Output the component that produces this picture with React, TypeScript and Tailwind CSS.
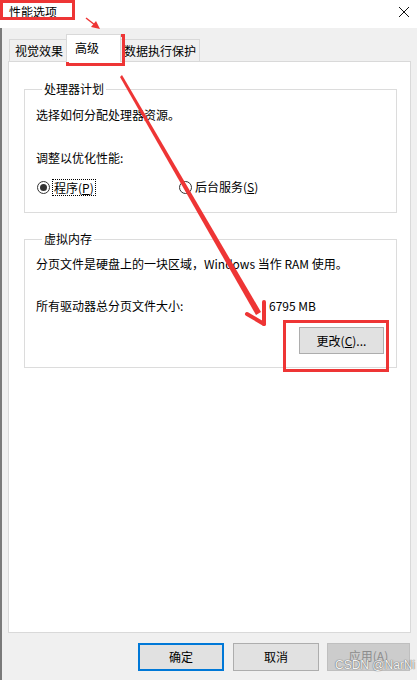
import React from "react";

const RED = "#ee3535";

function Radio({ checked }: { checked: boolean }) {
  return (
    <span className="w-[13px] h-[13px] rounded-full border border-[#333333] bg-white flex items-center justify-center shrink-0">
      {checked && <span className="w-[7px] h-[7px] rounded-full bg-[#333333]" />}
    </span>
  );
}

export default function App() {
  return (
    <div
      className="relative w-[417px] h-[680px] bg-[#f0f0f0] text-black text-[12px] leading-[16px] overflow-hidden"
      style={{ fontFamily: '"Noto Sans CJK SC", "Noto Sans", sans-serif' }}
    >
      {/* Title bar */}
      <div className="h-[28px] bg-white flex items-center justify-between pl-[9px] pr-[7px]">
        <span className="mt-[-4px]">性能选项</span>
        <svg width="12" height="12" viewBox="0 0 12 12" className="mt-[-4px]">
          <path d="M1 1 L11 11 M11 1 L1 11" stroke="#111" strokeWidth="1" />
        </svg>
      </div>

      {/* Body */}
      <div className="border-l-[2px] border-[#7a7a7a] pl-[6px] h-[652px] flex flex-col">
        {/* Tabs */}
        <div className="h-[33px] flex items-end pl-[1px]">
          <div className="h-[22px] w-[58px] border border-b-0 border-[#d9d9d9] flex items-center pl-[5px]">
            视觉效果
          </div>
          <div className="relative z-10 h-[28px] w-[55px] ml-[-1px] mb-[-1px] bg-white border border-b-0 border-[#d9d9d9] flex items-start pt-[5px] pl-[8px]">
            高级
          </div>
          <div className="h-[22px] w-[80px] ml-[-1px] border border-b-0 border-[#d9d9d9] flex items-center pl-[3px]">
            数据执行保护
          </div>
        </div>

        {/* Panel */}
        <div className="w-[403px] h-[572px] border border-[#d9d9d9] bg-white pt-[19px] pl-[15px]">
          <fieldset className="w-[373px] border border-[#dcdcdc] pl-[11px] pr-[12px] pb-[16px]">
            <legend className="ml-[6px] px-[2px]">处理器计划</legend>
            <div className="mt-[10px]">选择如何分配处理器资源。</div>
            <div className="mt-[27px]">调整以优化性能:</div>
            <div className="mt-[12px] h-[18px] flex items-center">
              <div className="w-[143px] flex items-center pl-[1px]">
                <Radio checked />
                <span className="ml-[2px] border border-dotted border-black px-[1px] leading-[15px]">
                  程序(<span className="underline">P</span>)
                </span>
              </div>
              <div className="flex items-center">
                <Radio checked={false} />
                <span className="ml-[3px]">
                  后台服务(<span className="underline">S</span>)
                </span>
              </div>
            </div>
          </fieldset>

          <fieldset className="mt-[18px] w-[373px] border border-[#dcdcdc] pl-[11px] pr-[12px] pb-[13px] flex flex-col">
            <legend className="ml-[6px] px-[2px]">虚拟内存</legend>
            <div className="mt-[9px]">分页文件是硬盘上的一块区域，Windows 当作 RAM 使用。</div>
            <div className="mt-[26px] flex">
              <span className="w-[233px]">所有驱动器总分页文件大小:</span>
              <span>6795 MB</span>
            </div>
            <div className="mt-[13px] flex justify-end">
              <button className="h-[27px] w-[85px] bg-[#e1e1e1] border border-[#adadad] flex items-center justify-center">
                更改(<span className="underline">C</span>)...
              </button>
            </div>
          </fieldset>
        </div>

        {/* Bottom buttons */}
        <div className="mt-[10px] flex justify-end pr-[7px]">
          <button className="h-[28px] w-[86px] bg-[#e1e1e1] border-2 border-[#0078d7] flex items-center justify-center">
            确定
          </button>
          <button className="ml-[9px] h-[28px] w-[86px] bg-[#e1e1e1] border border-[#adadad] flex items-center justify-center">
            取消
          </button>
          <button className="ml-[8px] h-[28px] w-[83px] bg-[#cccccc] border border-[#bfbfbf] text-[#8c8c8c] flex items-center justify-center pb-[3px]">
            应用(A)
          </button>
        </div>
      </div>

      {/* Watermark */}
      <div
        className="absolute left-[335px] top-[659px] whitespace-nowrap text-[12px] leading-[13px] text-[#f4f4f4]"
        style={{ fontFamily: '"Liberation Sans", sans-serif', textShadow: "0 0 1px #666, 0 0 1px #666" }}
      >
        CSDN @NarNi
      </div>

      {/* Annotations */}
      <div className="absolute left-0 top-0 w-[75px] h-[20px] border-[3px] border-[#ee3535]" />
      <div className="absolute left-[66px] top-[34px] w-[59px] h-[32px] border-[3px] border-[#ee3535]" />
      <div className="absolute left-[283px] top-[320px] w-[106px] h-[52px] border-[3px] border-[#ee3535]" />

      <svg className="absolute left-0 top-0 pointer-events-none" width="417" height="680">
        {/* small arrow near title */}
        <line x1="86" y1="18" x2="95" y2="25" stroke={RED} strokeWidth="1.5" />
        <polygon points="100,29 91,27 96,21" fill={RED} />
        {/* big arrow */}
        <polygon points="120,77 122,75 261,312 256,315" fill={RED} />
        <line x1="247" y1="314" x2="264" y2="324" stroke={RED} strokeWidth="4" strokeLinecap="round" />
        <line x1="264" y1="324" x2="264" y2="302" stroke={RED} strokeWidth="4" strokeLinecap="round" />
      </svg>
    </div>
  );
}
